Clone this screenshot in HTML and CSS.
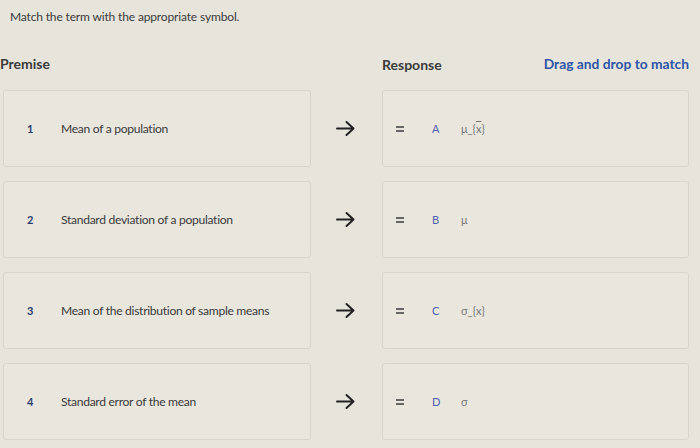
FILE: index.html
```html
<!DOCTYPE html>
<html>
<head>
<meta charset="utf-8">
<link rel="stylesheet" href="styles.css">
</head>
<body>
<div class="page">
  <p class="title">Match the term with the appropriate symbol.</p>
  <div class="header">
    <div class="h-premise">Premise</div>
    <div class="h-response">Response</div>
    <div class="h-drag">Drag and drop to match</div>
  </div>
  <div class="rows">
    <div class="row">
      <div class="card premise"><span class="num">1</span><span class="term">Mean of a population</span></div>
      <div class="arrow"><svg width="21" height="17" viewBox="0 0 21 17"><path d="M2 8.5H18.5M11.5 2L18.5 8.5L11.5 15" fill="none" stroke="#222" stroke-width="2" stroke-linecap="round" stroke-linejoin="round"/></svg></div>
      <div class="card response"><span class="eq"></span><span class="letter">A</span><span class="sym">μ_{<span class="ov">x</span>}</span></div>
    </div>
    <div class="row">
      <div class="card premise"><span class="num">2</span><span class="term">Standard deviation of a population</span></div>
      <div class="arrow"><svg width="21" height="17" viewBox="0 0 21 17"><path d="M2 8.5H18.5M11.5 2L18.5 8.5L11.5 15" fill="none" stroke="#222" stroke-width="2" stroke-linecap="round" stroke-linejoin="round"/></svg></div>
      <div class="card response"><span class="eq"></span><span class="letter">B</span><span class="sym">μ</span></div>
    </div>
    <div class="row">
      <div class="card premise"><span class="num">3</span><span class="term">Mean of the distribution of sample means</span></div>
      <div class="arrow"><svg width="21" height="17" viewBox="0 0 21 17"><path d="M2 8.5H18.5M11.5 2L18.5 8.5L11.5 15" fill="none" stroke="#222" stroke-width="2" stroke-linecap="round" stroke-linejoin="round"/></svg></div>
      <div class="card response"><span class="eq"></span><span class="letter">C</span><span class="sym">σ_{x}</span></div>
    </div>
    <div class="row">
      <div class="card premise"><span class="num">4</span><span class="term">Standard error of the mean</span></div>
      <div class="arrow"><svg width="21" height="17" viewBox="0 0 21 17"><path d="M2 8.5H18.5M11.5 2L18.5 8.5L11.5 15" fill="none" stroke="#222" stroke-width="2" stroke-linecap="round" stroke-linejoin="round"/></svg></div>
      <div class="card response"><span class="eq"></span><span class="letter">D</span><span class="sym">σ</span></div>
    </div>
  </div>
</div>
</body>
</html>
```
FILE: styles.css
```css
html, body {
  margin: 0;
  padding: 0;
  background: #e7e4dc;
}
body {
  font-family: Lato, "Noto Sans", sans-serif;
  color: #3a3a3a;
  width: 700px;
  height: 448px;
  overflow: hidden;
}
.page {
  padding: 0 11px 0 3px;
}
.title {
  margin: 0;
  padding: 9px 0 0 7px;
  font-size: 12px;
  line-height: 16px;
  letter-spacing: -0.15px;
  color: #3a3a3a;
}
.header {
  display: flex;
  align-items: center;
  height: 20px;
  margin-top: 28px;
  font-weight: 700;
  font-size: 14px;
}
.h-premise {
  margin-left: -3px;
  width: 382px;
  color: #3b3b3b;
}
.h-response {
  padding-top: 3px;
  color: #3b3b3b;
  flex: 1;
}
.h-drag {
  color: #2e55a6;
  font-size: 13.8px;
  padding-top: 1px;
}
.rows {
  margin-top: 17px;
  display: flex;
  flex-direction: column;
  gap: 14px;
}
.row {
  display: flex;
  height: 77px;
}
.card {
  border: 1px solid #d9d5cb;
  border-radius: 3px;
  background: #e9e6de;
  display: flex;
  align-items: center;
  box-sizing: border-box;
}
.premise {
  width: 308px;
  padding-left: 23px;
  font-size: 12.1px;
  letter-spacing: -0.3px;
}
.num {
  width: 34px;
  font-weight: 700;
  color: #2b3d70;
  font-size: 11px;
}
.term {
  color: #3a3a3a;
}
.arrow {
  width: 71px;
  display: flex;
  align-items: center;
  justify-content: center;
  padding-right: 2px;
  box-sizing: border-box;
}
.arrow svg {
  display: block;
}
.response {
  width: 307px;
  padding-left: 13px;
  font-size: 11px;
}
.eq {
  width: 8px;
  height: 2px;
  border-top: 2px solid #666;
  border-bottom: 2px solid #666;
  margin-right: 28px;
}
.letter {
  width: 29px;
  color: #5060b0;
  font-size: 11px;
}
.sym {
  color: #777;
  font-size: 11px;
}
.ov {
  text-decoration: overline;
}
```
